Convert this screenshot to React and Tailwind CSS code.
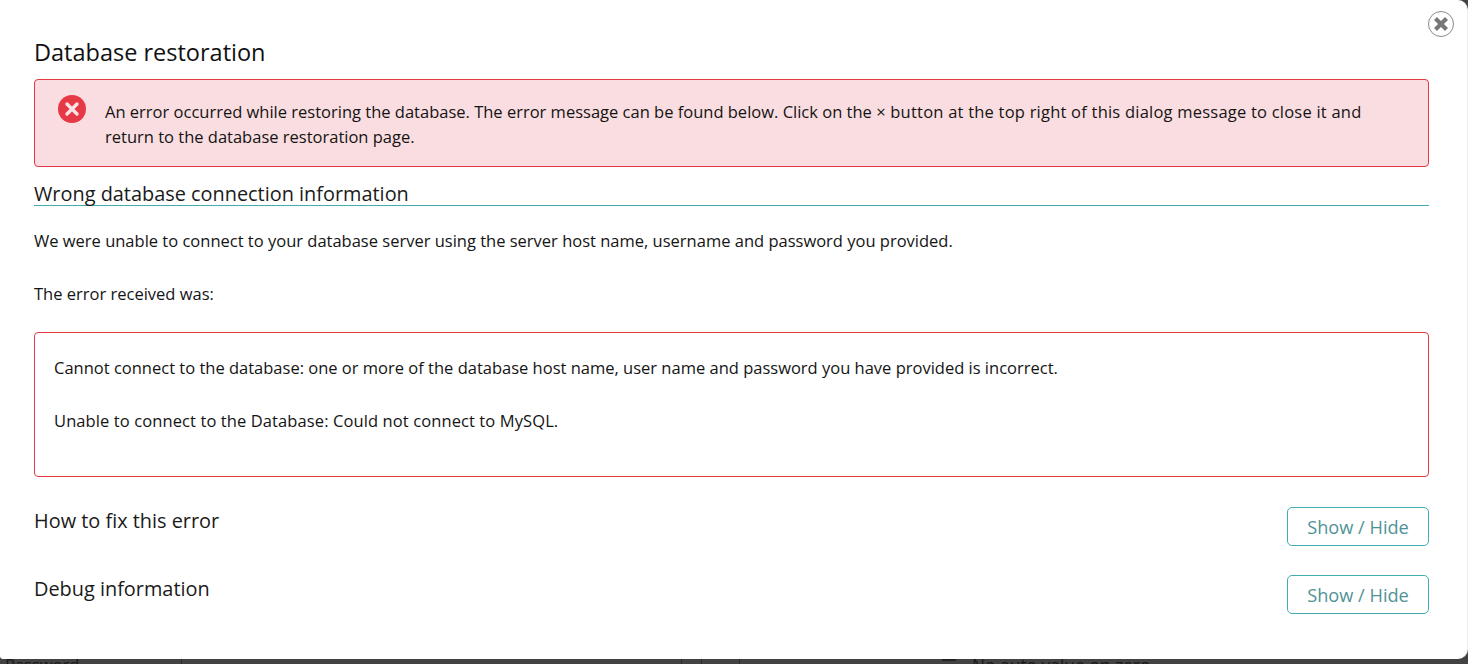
const FONT = "font-['Open_Sans','Noto_Sans',sans-serif]";

const ToggleRow = ({ title, className }) => (
  <div className={`flex items-start justify-between ${className}`}>
    <h3 className="text-[19.9px] leading-[26px] text-[#1a1a1a] mt-[1px]">{title}</h3>
    <button className="w-[142px] h-[39px] pt-[2px] rounded-[5px] border border-[#40aeb1] text-[#4f9396] text-[18.2px] bg-white">
      Show / Hide
    </button>
  </div>
);

export default function App() {
  return (
    <div className={`h-[664px] overflow-hidden bg-[#424242] text-[16.5px] text-[#141414] ${FONT}`}>
      <div className="relative h-[659px] bg-white rounded-tr-[10px] rounded-br-[10px] rounded-bl-[3px] border-r border-[#eeeeee] pl-[34px] pr-[38px] pt-[37px]">
        {/* close button sits over the dialog corner */}
        <button className="absolute top-[11px] right-[13px] w-[26px] h-[26px] rounded-full border border-[#8a8a8a] bg-white flex items-center justify-center">
          <svg viewBox="0 0 18 18" className="w-[18px] h-[18px]">
            <path d="M3.5 3.5l11 11M14.5 3.5l-11 11" stroke="#777" strokeWidth="4.2" />
          </svg>
        </button>

        <h1 className="text-[23.5px] leading-[30px] text-[#111]">Database restoration</h1>

        <div className="mt-[12px] h-[88px] flex rounded-[4px] border border-[#e63946] bg-[#fadde0] pl-[22px] pt-[19px]">
          <svg viewBox="0 0 28 28" className="w-[28px] h-[28px] shrink-0 -mt-[4px] ml-[1px]">
            <circle cx="14" cy="14" r="14" fill="#e63946" />
            <path d="M9 9l10 10M19 9L9 19" stroke="#fbe3e5" strokeWidth="3.4" strokeLinecap="round" />
          </svg>
          <p className="ml-[19px] w-[1270px] leading-[25px]">
            An error occurred while restoring the database. The error message can be found below. Click on the{" "}
            <span className="tracking-[0.22px]">× button at the top right of this dialog message to close it and</span> return to the database restoration page.
          </p>
        </div>

        <h2 className="mt-[14px] text-[19.9px] leading-[25px] border-b border-[#40aeb1] h-[25px] text-[#1a1a1a]">
          Wrong database connection information
        </h2>
        <p className="mt-[24px] leading-[22px]">
          We were unable to connect to your database server using the server host name, username and password you provided.
        </p>
        <p className="mt-[31px] leading-[22px]">The error received was:</p>

        <div className="mt-[27px] h-[145px] rounded-[4px] border border-[#e63946] px-[19px] pt-[24px]">
          <p className="leading-[22px]">
            Cannot connect to the database: one or more of the database host name, user name and password you have provided is incorrect.
          </p>
          <p className="mt-[31px] leading-[22px] tracking-[0.1px]">Unable to connect to the Database: Could not connect to MySQL.</p>
        </div>

        <ToggleRow title="How to fix this error" className="mt-[30px]" />
        <ToggleRow title="Debug information" className="mt-[29px]" />
      </div>

      {/* page behind the dialog, only the top of its last row shows */}
      <div className="flex h-[5px] leading-none text-[#1a1a1a]">
        <span className="ml-[5px] w-[71px] text-[16.5px] -mt-[2px]">Password</span>
        <span className="w-px bg-[#2a2a2a]" />
        <span className="w-[104px]" />
        <span className="w-px bg-[#2a2a2a]" />
        <span className="ml-[15px] w-[484px] text-[10px] tracking-[0.6px] mt-[1px]">●●●●●●●●●●</span>
        <span className="w-px bg-[#2a2a2a]" />
        <span className="w-[19px]" />
        <span className="w-px bg-[#2a2a2a]" />
        <span className="w-[37px]" />
        <span className="w-px bg-[#2a2a2a]" />
        <span className="ml-[202px] w-[14px] h-[2px] bg-[#222]" />
        <span className="ml-[16px] text-[17.4px] -mt-[2px] whitespace-nowrap">No auto value on zero</span>
      </div>
    </div>
  );
}
